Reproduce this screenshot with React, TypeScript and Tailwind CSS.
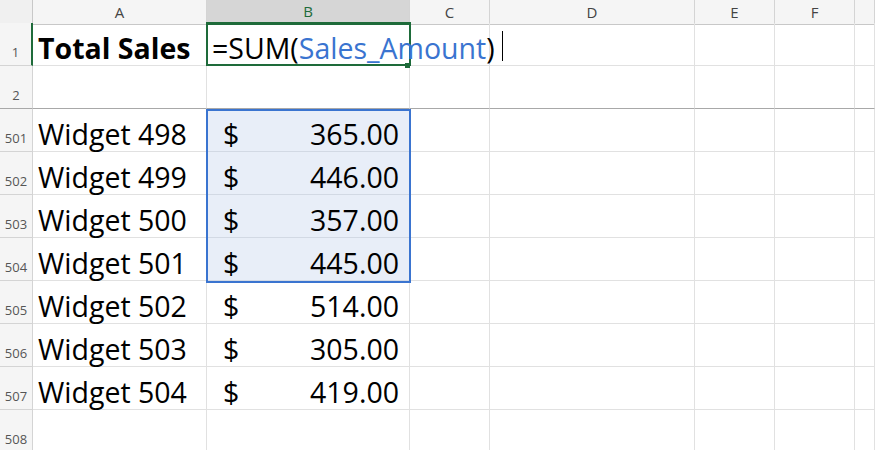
import React from 'react';

const cols = ['A', 'B', 'C', 'D', 'E', 'F', ''];
const rows = [
  { n: '501', name: 'Widget 498', amt: '365.00' },
  { n: '502', name: 'Widget 499', amt: '446.00' },
  { n: '503', name: 'Widget 500', amt: '357.00' },
  { n: '504', name: 'Widget 501', amt: '445.00' },
  { n: '505', name: 'Widget 502', amt: '514.00' },
  { n: '506', name: 'Widget 503', amt: '305.00' },
  { n: '507', name: 'Widget 504', amt: '419.00' },
];

const grid = 'grid grid-cols-[33px_174px_203px_80px_205px_80px_80px_1fr]';
const cell = 'border-r border-b border-[#e1e1e1] h-[43px] flex items-end pb-[3px] px-[5px] text-[28.5px] leading-none text-black';
const rowHead = 'bg-[#f5f5f5] border-r border-b border-[#d4d4d4] h-[43px] flex items-end justify-center pb-[3px] text-[13px] text-[#555]';

const Empty = () => (
  <>
    {[0, 1, 2, 3, 4].map((i) => (
      <div key={i} className="border-r border-b border-[#e1e1e1] h-[43px]" />
    ))}
  </>
);

export default function App() {
  return (
    <div className="relative w-[875px] h-[450px] overflow-hidden bg-white" style={{ fontFamily: '"Open Sans", "Liberation Sans", sans-serif' }}>
      <div className={`${grid} h-[23px]`}>
        <div className="bg-[#f0f0f0] border-r border-b border-[#c8c8c8]" />
        {cols.map((c, i) => (
          <div key={i} className={`flex items-center justify-center text-[15px] border-r border-[#d4d4d4] ${c === 'B' ? 'bg-[#d6d6d6] text-[#1e6b3a] border-b-2 border-b-[#1e6b3a]' : 'bg-[#f5f5f5] text-[#444] border-b border-b-[#c8c8c8]'}`}>
            {c}
          </div>
        ))}
      </div>
      <div className={grid}>
        <div className={`${rowHead} bg-[#e6e6e6] text-[#1e6b3a] border-r-2 border-r-[#1e6b3a]`}>1</div>
        <div className={`${cell} font-bold text-[27px]`}>Total Sales</div>
        <div className={`${cell} relative overflow-visible z-10`}>
          <div className="absolute -left-px -top-px w-[205px] h-[44px] border-2 border-[#1e6b3a]" />
          <div className="absolute right-[-1px] bottom-[-3px] w-[5px] h-[5px] bg-[#1e6b3a]" />
          <span className="whitespace-nowrap relative">
            =SUM(<span className="text-[#3a74d0]">Sales_Amount</span>)
          </span>
          <span className="absolute left-[295px] top-[8px] w-px h-[30px] bg-black" />
        </div>
        <Empty />
        <div className={`${rowHead} border-b-[#a8a8a8]`}>2</div>
        <div className={`${cell} border-b-[#a8a8a8]`} />
        <div className={`${cell} border-b-[#a8a8a8]`} />
        {[0, 1, 2, 3, 4].map((i) => (
          <div key={i} className="border-r border-b border-[#e1e1e1] border-b-[#a8a8a8] h-[43px]" />
        ))}
        {rows.map((r, i) => (
          <React.Fragment key={r.n}>
            <div className={rowHead}>{r.n}</div>
            <div className={cell}>{r.name}</div>
            <div className={`${cell} justify-between pl-[16px] pr-[10px] ${i < 4 ? 'bg-[#e8eef8] border-b-[#d2d9e4]' : ''}`}>
              <span>$</span>
              <span>{r.amt}</span>
            </div>
            <Empty />
          </React.Fragment>
        ))}
        <div className={rowHead}>508</div>
        <div className={cell} />
        <div className={cell} />
        <Empty />
      </div>
      <div className="absolute left-[206px] top-[109px] w-[205px] h-[174px] border-2 border-[#3a74d0] pointer-events-none" />
    </div>
  );
}
